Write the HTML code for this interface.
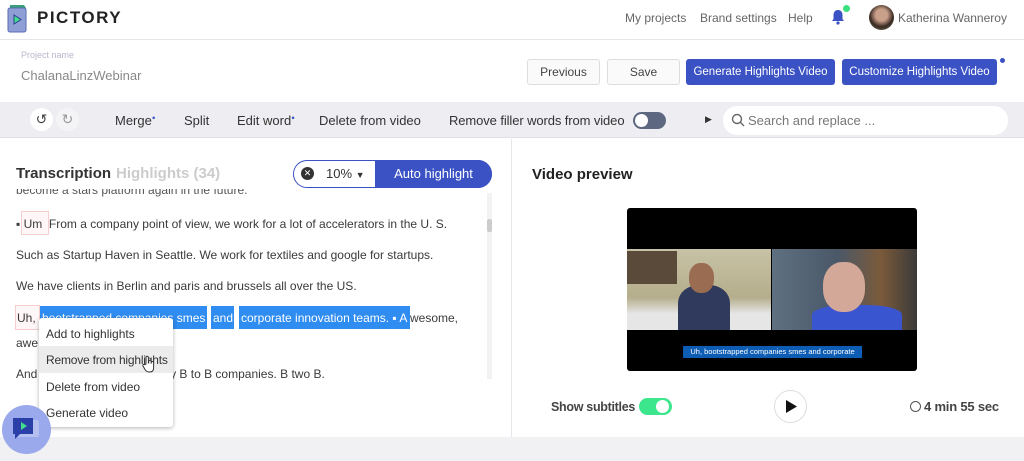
<!DOCTYPE html><html><head><style>
*{margin:0;padding:0;box-sizing:border-box}
body{width:1024px;height:461px;overflow:hidden;background:#fff;font-family:"Liberation Sans",sans-serif;position:relative;color:#333}
.a{position:absolute;white-space:nowrap}
.btn{position:absolute;height:26px;border-radius:3px;font-size:11.5px;display:flex;align-items:center;justify-content:center}
.tl{position:absolute;font-size:12px;color:#3a3a3a;white-space:nowrap}
.tb{position:absolute;top:113px;font-size:13px;color:#333;white-space:nowrap}
</style></head><body>
<!-- header -->
<svg class="a" style="left:4px;top:3px" width="26" height="30" viewBox="0 0 26 30"><path d="M6 2h14l2 3v22H6z" fill="#3a9e7a"/><rect x="4" y="5" width="18" height="24" rx="2" fill="#8f9fd6" stroke="#5b6bb5"/><path d="M10 12v9l7-4.5z" fill="#3fe08a" stroke="#2d3f8f" stroke-width="1"/></svg>
<div class="a" style="left:37px;top:8px;font-size:17px;font-weight:bold;letter-spacing:1.5px;color:#222">PICTORY</div>
<div class="a" style="left:625px;top:11px;font-size:12px;color:#666">My projects</div>
<div class="a" style="left:700px;top:11px;font-size:12px;color:#666">Brand settings</div>
<div class="a" style="left:788px;top:11px;font-size:12px;color:#666">Help</div>
<svg class="a" style="left:831px;top:9px" width="14" height="16" viewBox="0 0 14 16"><path d="M7 1c3 0 4.5 2.3 4.5 5v4l1.5 2H1l1.5-2V6C2.5 3.3 4 1 7 1z" fill="#3b52c4"/><circle cx="7" cy="14" r="1.6" fill="#3b52c4"/></svg>
<div class="a" style="left:843px;top:5px;width:7px;height:7px;border-radius:50%;background:#3be07e"></div>
<div class="a" style="left:869px;top:5px;width:25px;height:25px;border-radius:50%;background:radial-gradient(circle at 50% 40%,#c9a08a 30%,#3b2a22 60%,#6a7a5a)"></div>
<div class="a" style="left:898px;top:11px;font-size:12px;color:#666">Katherina Wanneroy</div>
<div class="a" style="left:0;top:39px;width:1024px;height:1px;background:#e6e6ea"></div>
<!-- project -->
<div class="a" style="left:21px;top:50px;font-size:9px;color:#b8b8cc">Project name</div>
<div class="a" style="left:21px;top:68px;font-size:13px;color:#888">ChalanaLinzWebinar</div>
<div class="btn" style="left:527px;top:59px;width:73px;border:1px solid #ddd;background:#fafafa;color:#444;font-size:12px">Previous</div>
<div class="btn" style="left:607px;top:59px;width:73px;border:1px solid #ddd;background:#fafafa;color:#444;font-size:12px">Save</div>
<div class="btn" style="left:686px;top:59px;width:149px;background:#3b52c4;color:#fff">Generate Highlights Video</div>
<div class="btn" style="left:842px;top:59px;width:155px;background:#3b52c4;color:#fff">Customize Highlights Video</div>
<div class="a" style="left:1000px;top:58px;width:5px;height:5px;border-radius:50%;background:#3b52c4"></div>
<!-- toolbar -->
<div class="a" style="left:0;top:102px;width:1024px;height:36px;background:#eeeef2;border-bottom:1px solid #e0e0e6"></div>
<div class="a" style="left:30px;top:108px;width:23px;height:23px;border-radius:50%;background:#fff;font-size:14px;text-align:center;line-height:23px;color:#444">↺</div>
<div class="a" style="left:56px;top:108px;width:23px;height:23px;border-radius:50%;background:#f4f4f6;font-size:14px;text-align:center;line-height:23px;color:#999">↻</div>
<div class="tb" style="left:115px">Merge<sup style="font-size:6px;color:#3b52c4">●</sup></div>
<div class="tb" style="left:184px">Split</div>
<div class="tb" style="left:237px">Edit word<sup style="font-size:6px;color:#3b52c4">●</sup></div>
<div class="tb" style="left:319px">Delete from video</div>
<div class="tb" style="left:449px;letter-spacing:-0.1px">Remove filler words from video</div>
<div class="a" style="left:633px;top:112px;width:33px;height:17px;border-radius:9px;background:#5d6880"></div>
<div class="a" style="left:635px;top:114px;width:13px;height:13px;border-radius:50%;background:#fff"></div>
<div class="a" style="left:705px;top:114px;font-size:9px;color:#333">▶</div>
<div class="a" style="left:723px;top:106px;width:285px;height:29px;border-radius:14px;background:#fff"></div>
<svg class="a" style="left:731px;top:113px" width="14" height="14" viewBox="0 0 14 14"><circle cx="6" cy="6" r="4.5" fill="none" stroke="#666" stroke-width="1.4"/><path d="M9.3 9.3L13 13" stroke="#666" stroke-width="1.4"/></svg>
<div class="a" style="left:748px;top:113px;font-size:13px;color:#777">Search and replace ...</div>
<!-- left panel -->
<div class="a" style="left:511px;top:139px;width:1px;height:298px;background:#e6e6ea"></div>
<div class="a" style="left:16px;top:165px;font-size:15px;font-weight:bold;color:#333">Transcription</div>
<div class="a" style="left:116px;top:165px;font-size:15px;font-weight:bold;color:#ccc">Highlights (34)</div>
<div class="a" style="left:293px;top:160px;width:199px;height:28px;border:1.5px solid #3b52c4;border-radius:14px;background:#fff"></div>
<div class="a" style="left:375px;top:160px;width:117px;height:28px;border-radius:0 14px 14px 0;background:#3b52c4;color:#fff;font-size:13px;line-height:28px;text-align:center">Auto highlight</div>
<div class="a" style="left:301px;top:167px;width:13px;height:13px;border-radius:50%;background:#333;color:#fff;font-size:9px;line-height:13px;text-align:center">✕</div>
<div class="a" style="left:326px;top:166px;font-size:13px;color:#333">10% <span style="font-size:9px">▼</span></div>
<div class="a" style="left:16px;top:189px;width:400px;height:10px;overflow:hidden"><div class="tl" style="left:0;top:-6px;color:#555">become a stars platform again in the future.</div></div>
<div class="a" style="left:21px;top:211px;width:28px;height:24px;border:1px solid #f6cccc;background:#fff7f7"></div>
<div class="tl" style="left:16px;top:217px">▪ Um &nbsp;From a company point of view, we work for a lot of accelerators in the U. S.</div>
<div class="tl" style="left:16px;top:248px">Such as Startup Haven in Seattle. We work for textiles and google for startups.</div>
<div class="tl" style="left:16px;top:279px">We have clients in Berlin and paris and brussels all over the US.</div>
<div class="a" style="left:15px;top:305px;width:25px;height:25px;border:1px solid #f6cccc;background:#fff7f7"></div>
<div class="a" style="left:40px;top:306px;width:167px;height:23px;background:#2f8cf0"></div>
<div class="a" style="left:211px;top:306px;width:23px;height:23px;background:#2f8cf0"></div>
<div class="a" style="left:239px;top:306px;width:171px;height:23px;background:#2f8cf0"></div>
<div class="tl" style="left:17px;top:311px">Uh,</div>
<div class="tl" style="left:42px;top:311px;color:#fff">bootstrapped companies smes</div>
<div class="tl" style="left:213px;top:311px;color:#fff">and</div>
<div class="tl" style="left:241px;top:311px;color:#fff">corporate innovation teams. ▪ A</div>
<div class="tl" style="left:410px;top:311px">wesome,</div>
<div class="tl" style="left:16px;top:336px">awe</div>
<div class="tl" style="left:16px;top:367px">And our customers are largely B to B companies. B two B.</div>
<div class="a" style="left:487px;top:193px;width:5px;height:186px;background:#f2f2f2"></div>
<div class="a" style="left:487px;top:219px;width:5px;height:13px;background:#ccc;border-radius:2px"></div>
<!-- menu -->
<div class="a" style="left:39px;top:318px;width:134px;height:109px;background:#fff;border-radius:3px;box-shadow:0 1px 4px rgba(0,0,0,.3)"></div>
<div class="a" style="left:39px;top:346px;width:134px;height:27px;background:#ececec"></div>
<div class="a" style="left:46px;top:327px;font-size:12px;color:#333">Add to highlights</div>
<div class="a" style="left:46px;top:353px;font-size:12px;color:#333;letter-spacing:-0.2px">Remove from highlights</div>
<div class="a" style="left:46px;top:380px;font-size:12px;color:#333">Delete from video</div>
<div class="a" style="left:46px;top:406px;font-size:12px;color:#333">Generate video</div>
<svg class="a" style="left:142px;top:355px" width="14" height="18" viewBox="0 0 14 18"><path d="M4 9V2.5a1.2 1.2 0 012.4 0V8h.3V6.5a1.2 1.2 0 012.4 0V8h.2V7.3a1.2 1.2 0 012.3 0V13c0 2.5-1.5 4-4 4H7c-2 0-3-1-4-2.5L1 11a1.2 1.2 0 012-1.3z" fill="#fff" stroke="#333" stroke-width="1"/></svg>
<!-- right panel -->
<div class="a" style="left:532px;top:166px;font-size:15px;font-weight:bold;color:#222">Video preview</div>
<div class="a" style="left:627px;top:208px;width:290px;height:163px;background:#000;border-radius:3px"></div>
<div class="a" style="left:627px;top:249px;width:144px;height:81px;background:linear-gradient(180deg,#c8c2a6,#b5ae8c 60%,#e6e6e6 80%)"></div>
<div class="a" style="left:627px;top:251px;width:50px;height:33px;background:#5a4a3a"></div>
<div class="a" style="left:678px;top:285px;width:52px;height:45px;border-radius:40% 40% 0 0;background:#2f3a5c"></div>
<div class="a" style="left:689px;top:263px;width:25px;height:30px;border-radius:45%;background:#9a6c52"></div>
<div class="a" style="left:772px;top:249px;width:145px;height:81px;background:linear-gradient(90deg,#5f7080,#4a5868 45%,#7b5a3a 75%,#3a3a3a)"></div>
<div class="a" style="left:812px;top:305px;width:90px;height:25px;border-radius:40% 40% 0 0;background:#3a55d0"></div>
<div class="a" style="left:823px;top:262px;width:42px;height:50px;border-radius:45%;background:#d4a898"></div>
<div class="a" style="left:683px;top:346px;width:179px;height:12px;background:#0d5db5;color:#fff;font-size:7.5px;line-height:12px;text-align:center">Uh, bootstrapped companies smes and corporate</div>
<div class="a" style="left:551px;top:400px;font-size:12.5px;font-weight:bold;color:#444;letter-spacing:-0.3px">Show subtitles</div>
<div class="a" style="left:639px;top:398px;width:33px;height:17px;border-radius:9px;background:#3ce68c"></div>
<div class="a" style="left:656px;top:400px;width:13px;height:13px;border-radius:50%;background:#fff"></div>
<div class="a" style="left:774px;top:390px;width:33px;height:33px;border-radius:50%;border:1px solid #ddd;background:#fff"></div>
<svg class="a" style="left:785px;top:400px" width="12" height="13"><path d="M1 0v13l11-6.5z" fill="#111"/></svg>
<div class="a" style="left:910px;top:401px;width:11px;height:11px;border-radius:50%;border:1.2px solid #555"></div>
<div class="a" style="left:924px;top:399px;font-size:13px;font-weight:bold;color:#444;letter-spacing:-0.2px">4 min 55 sec</div>
<!-- bottom -->
<div class="a" style="left:0;top:437px;width:1024px;height:24px;background:#f1f1f4"></div>
<div class="a" style="left:2px;top:405px;width:49px;height:49px;border-radius:50%;background:#9aa8ec"></div>
<svg class="a" style="left:11px;top:416px" width="30" height="28" viewBox="0 0 30 28"><rect x="6" y="4" width="22" height="17" rx="2" fill="#b6c0f0"/><path d="M2 2h20v16H9l-5 5v-5H2z" fill="#2b3fa8"/><path d="M10 6v8l6-4z" fill="#3fe08a"/></svg>
</body></html>
